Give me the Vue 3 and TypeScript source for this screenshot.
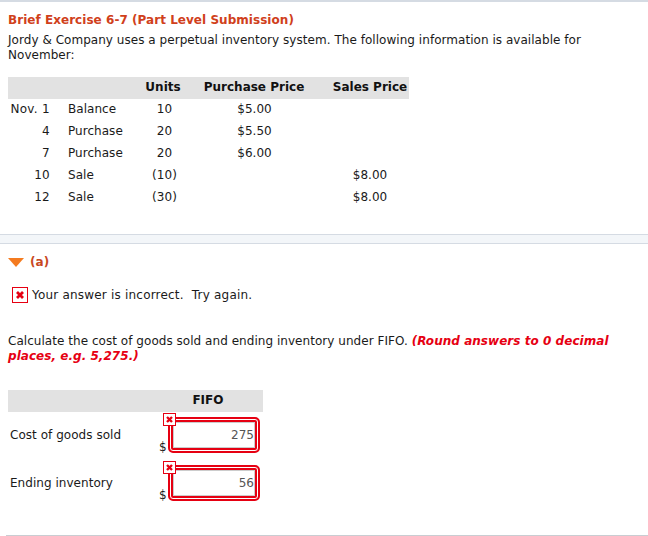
<template>
  <div class="page">
    <div class="top-rule"></div>

    <section class="intro">
      <h1 class="title">Brief Exercise 6-7 (Part Level Submission)</h1>
      <p class="lead">
        Jordy &amp; Company uses a perpetual inventory system. The following information is available for November:
      </p>

      <div class="stock-table">
        <div class="stock-row head">
          <span></span>
          <span></span>
          <span class="center">Units</span>
          <span class="center">Purchase Price</span>
          <span class="center sales">Sales Price</span>
        </div>
        <div v-for="row in rows" :key="row.date" class="stock-row">
          <span class="date">{{ row.date }}</span>
          <span>{{ row.kind }}</span>
          <span class="center units">{{ row.units }}</span>
          <span class="center price">{{ row.purchase }}</span>
          <span class="center sales">{{ row.sale }}</span>
        </div>
      </div>
    </section>

    <div class="band"></div>

    <section class="part">
      <h2 class="part-title">
        <svg class="arrow" width="16" height="9" viewBox="0 0 16 9">
          <path d="M0 0H16L8 9Z" fill="#f47b20" />
        </svg>
        (a)
      </h2>

      <div class="verdict">
        <span class="cross-box">
          <svg width="10" height="10" viewBox="0 0 10 10">
            <path d="M2 2L8 8M8 2L2 8" stroke="#e60012" stroke-width="2.8" />
          </svg>
        </span>
        <span class="verdict-text">Your answer is incorrect.&nbsp; Try again.</span>
      </div>

      <p class="question">
        Calculate the cost of goods sold and ending inventory under FIFO.
        <em>(Round answers to 0 decimal places, e.g. 5,275.)</em>
      </p>

      <div class="fifo-table">
        <div class="fifo-head">
          <span></span>
          <span class="fifo-name">FIFO</span>
        </div>
        <div v-for="item in answers" :key="item.label" class="fifo-row">
          <span class="fifo-label">{{ item.label }}</span>
          <div class="answer">
            <span class="dollar">$</span>
            <span class="small-cross">
              <svg width="9" height="9" viewBox="0 0 9 9">
                <path d="M2 2L7 7M7 2L2 7" stroke="#e60012" stroke-width="2.4" />
              </svg>
            </span>
            <div class="answer-box">{{ item.value }}</div>
          </div>
        </div>
      </div>
    </section>

    <div class="bottom-rule"></div>
  </div>
</template>

<script setup lang="ts">
interface StockRow {
  date: string
  kind: string
  units: string
  purchase: string
  sale: string
}

const rows: StockRow[] = [
  { date: 'Nov. 1', kind: 'Balance', units: '10', purchase: '$5.00', sale: '' },
  { date: '4', kind: 'Purchase', units: '20', purchase: '$5.50', sale: '' },
  { date: '7', kind: 'Purchase', units: '20', purchase: '$6.00', sale: '' },
  { date: '10', kind: 'Sale', units: '(10)', purchase: '', sale: '$8.00' },
  { date: '12', kind: 'Sale', units: '(30)', purchase: '', sale: '$8.00' },
]

const answers = [
  { label: 'Cost of goods sold', value: '275' },
  { label: 'Ending inventory', value: '56' },
]
</script>

<style>
html,
body {
  margin: 0;
  background: #fff;
}
</style>

<style scoped>
.page {
  width: 648px;
  height: 536px;
  overflow: hidden;
  font-family: "DejaVu Sans", Verdana, sans-serif;
  font-size: 12px;
  letter-spacing: 0.04px;
  line-height: 15px;
  color: #1a1a1a;
  display: flex;
  flex-direction: column;
}

.top-rule {
  height: 2px;
  background: #d5dbe3;
  flex: none;
}

.intro {
  padding: 11px 0 0 8px;
  height: 232px;
  box-sizing: border-box;
  flex: none;
}

.title {
  margin: 0;
  font-size: 12px;
  line-height: 15px;
  font-weight: bold;
  color: #d0401b;
}

.lead {
  margin: 5px 60px 0 0;
}

.stock-table {
  margin-top: 14px;
}

.stock-row {
  display: grid;
  grid-template-columns: 60px 64px 62px 120px 95px;
  height: 22px;
  box-sizing: border-box;
  padding-bottom: 1px;
  align-items: center;
  width: 401px;
}

.head {
  background: #e2e2e2;
  font-weight: bold;
  color: #111;
  letter-spacing: 0;
}

.center {
  text-align: center;
  white-space: nowrap;
}

.units {
  padding-left: 3px;
}

.price {
  padding-left: 1px;
}

.sales {
  padding-left: 17px;
}

.date {
  text-align: right;
  padding-right: 18px;
  letter-spacing: 0.3px;
}

.band {
  flex: none;
  height: 8px;
  background: #f3f6f9;
  border-top: 1px solid #d5dbe3;
  border-bottom: 1px solid #d5dbe3;
}

.part {
  flex: 1;
  padding: 11px 0 0 8px;
}

.part-title {
  margin: 0;
  display: flex;
  align-items: center;
  gap: 6px;
  font-size: 12px;
  line-height: 15px;
  font-weight: bold;
  color: #c8481f;
}

.verdict {
  margin: 17px 0 0 4px;
  display: flex;
  align-items: center;
  gap: 4px;
}

.verdict-text {
  letter-spacing: 0.2px;
  white-space: pre;
}

.cross-box {
  width: 14px;
  height: 14px;
  border: 1px solid #e60012;
  display: flex;
  align-items: center;
  justify-content: center;
}

.question {
  margin: 31px 30px 0 0;
}

.question em {
  font-weight: bold;
  font-style: italic;
  color: #e60012;
}

.fifo-table {
  margin-top: 26px;
  width: 255px;
}

.fifo-head {
  display: grid;
  grid-template-columns: 150px 105px;
  height: 22px;
  box-sizing: border-box;
  padding-bottom: 1px;
  align-items: center;
  background: #e2e2e2;
  font-weight: bold;
  color: #111;
  text-align: center;
}

.fifo-name {
  padding-right: 5px;
}

.fifo-row {
  display: grid;
  grid-template-columns: 150px 105px;
  height: 48px;
  align-items: start;
}

.fifo-label {
  padding: 16px 0 0 2px;
}

.answer {
  position: relative;
  height: 36px;
  margin-top: 5px;
  padding-left: 10px;
}

.dollar {
  position: absolute;
  left: 1px;
  bottom: -2px;
}

.small-cross {
  position: absolute;
  left: 5px;
  top: -4px;
  width: 11px;
  height: 11px;
  border: 1px solid #e60012;
  background: #fff;
  display: flex;
  align-items: center;
  justify-content: center;
  z-index: 1;
}

.answer-box {
  box-sizing: border-box;
  width: 92px;
  height: 36px;
  border: 2px solid #e60012;
  border-radius: 5px;
  box-shadow: inset 0 0 0 1px #fff, inset 0 0 0 3px #e60012, inset 0 0 0 4px #ccc;
  padding: 9px 4px 0 0;
  text-align: right;
  color: #555;
}

.bottom-rule {
  flex: none;
  height: 1px;
  margin-left: 6px;
  background: #c9cdd2;
}
</style>
